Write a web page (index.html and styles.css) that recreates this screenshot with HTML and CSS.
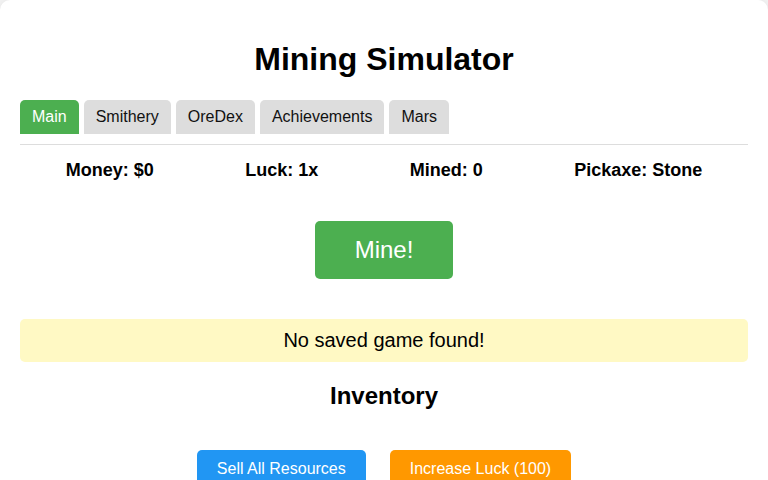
FILE: index.html
```html
<!DOCTYPE html>
<html lang="en">
<head>
<meta charset="utf-8">
<title>Mining Simulator</title>
<link rel="stylesheet" href="styles.css">
</head>
<body>
<div class="container">
  <h1 class="title">Mining Simulator</h1>
  <div class="tabs">
    <button class="tab active">Main</button>
    <button class="tab">Smithery</button>
    <button class="tab">OreDex</button>
    <button class="tab">Achievements</button>
    <button class="tab">Mars</button>
  </div>
  <div class="stats">
    <div class="stat">Money: $0</div>
    <div class="stat">Luck: 1x</div>
    <div class="stat">Mined: 0</div>
    <div class="stat">Pickaxe: Stone</div>
  </div>
  <div class="mine-row">
    <button class="mine-btn">Mine!</button>
  </div>
  <div class="message">No saved game found!</div>
  <h2 class="section-title">Inventory</h2>
  <div class="inventory"></div>
  <div class="actions">
    <button class="action sell">Sell All Resources</button>
    <button class="action luck">Increase Luck (100)</button>
  </div>
</div>
</body>
</html>
```
FILE: styles.css
```css
html, body {
  margin: 0;
  padding: 0;
}
body {
  background: #f4f4f4;
  font-family: "Liberation Sans", Arial, sans-serif;
  color: #000;
}
.container {
  background: #fff;
  border-radius: 10px;
  padding: 20px;
  box-shadow: 0 0 10px rgba(0, 0, 0, 0.08);
  min-height: 600px;
}
.title {
  text-align: center;
  font-size: 32px;
  margin: 21px 0 22px;
  line-height: 37px;
}
.tabs {
  display: flex;
  gap: 5px;
  padding-bottom: 10px;
  border-bottom: 1px solid #ddd;
}
.tab {
  font-family: inherit;
  font-size: 16px;
  line-height: 18px;
  padding: 8px 12px;
  border: none;
  border-radius: 5px 5px 0 0;
  background: #ddd;
  color: #111;
}
.tab.active {
  background: #4caf50;
  color: #fff;
}
.stats {
  display: flex;
  justify-content: space-around;
  font-size: 18px;
  font-weight: bold;
  line-height: 21px;
  margin: 15px 0 40px;
}
.mine-row {
  display: flex;
  justify-content: center;
}
.mine-btn {
  font-family: inherit;
  font-size: 24px;
  line-height: 28px;
  padding: 15px 40px;
  border: none;
  border-radius: 5px;
  background: #4caf50;
  color: #fff;
}
.message {
  margin-top: 40px;
  background: #fff9c4;
  border-radius: 5px;
  padding: 10px;
  font-size: 20px;
  line-height: 23px;
  text-align: center;
}
.section-title {
  text-align: center;
  font-size: 24px;
  line-height: 28px;
  margin: 20px 0;
}
.inventory {
  min-height: 20px;
}
.actions {
  display: flex;
  justify-content: center;
  gap: 24px;
}
.action {
  font-family: inherit;
  font-size: 16px;
  line-height: 18px;
  padding: 10px 20px;
  border: none;
  border-radius: 5px;
  color: #fff;
}
.sell {
  background: #2196f3;
}
.luck {
  background: #ff9800;
}
```
